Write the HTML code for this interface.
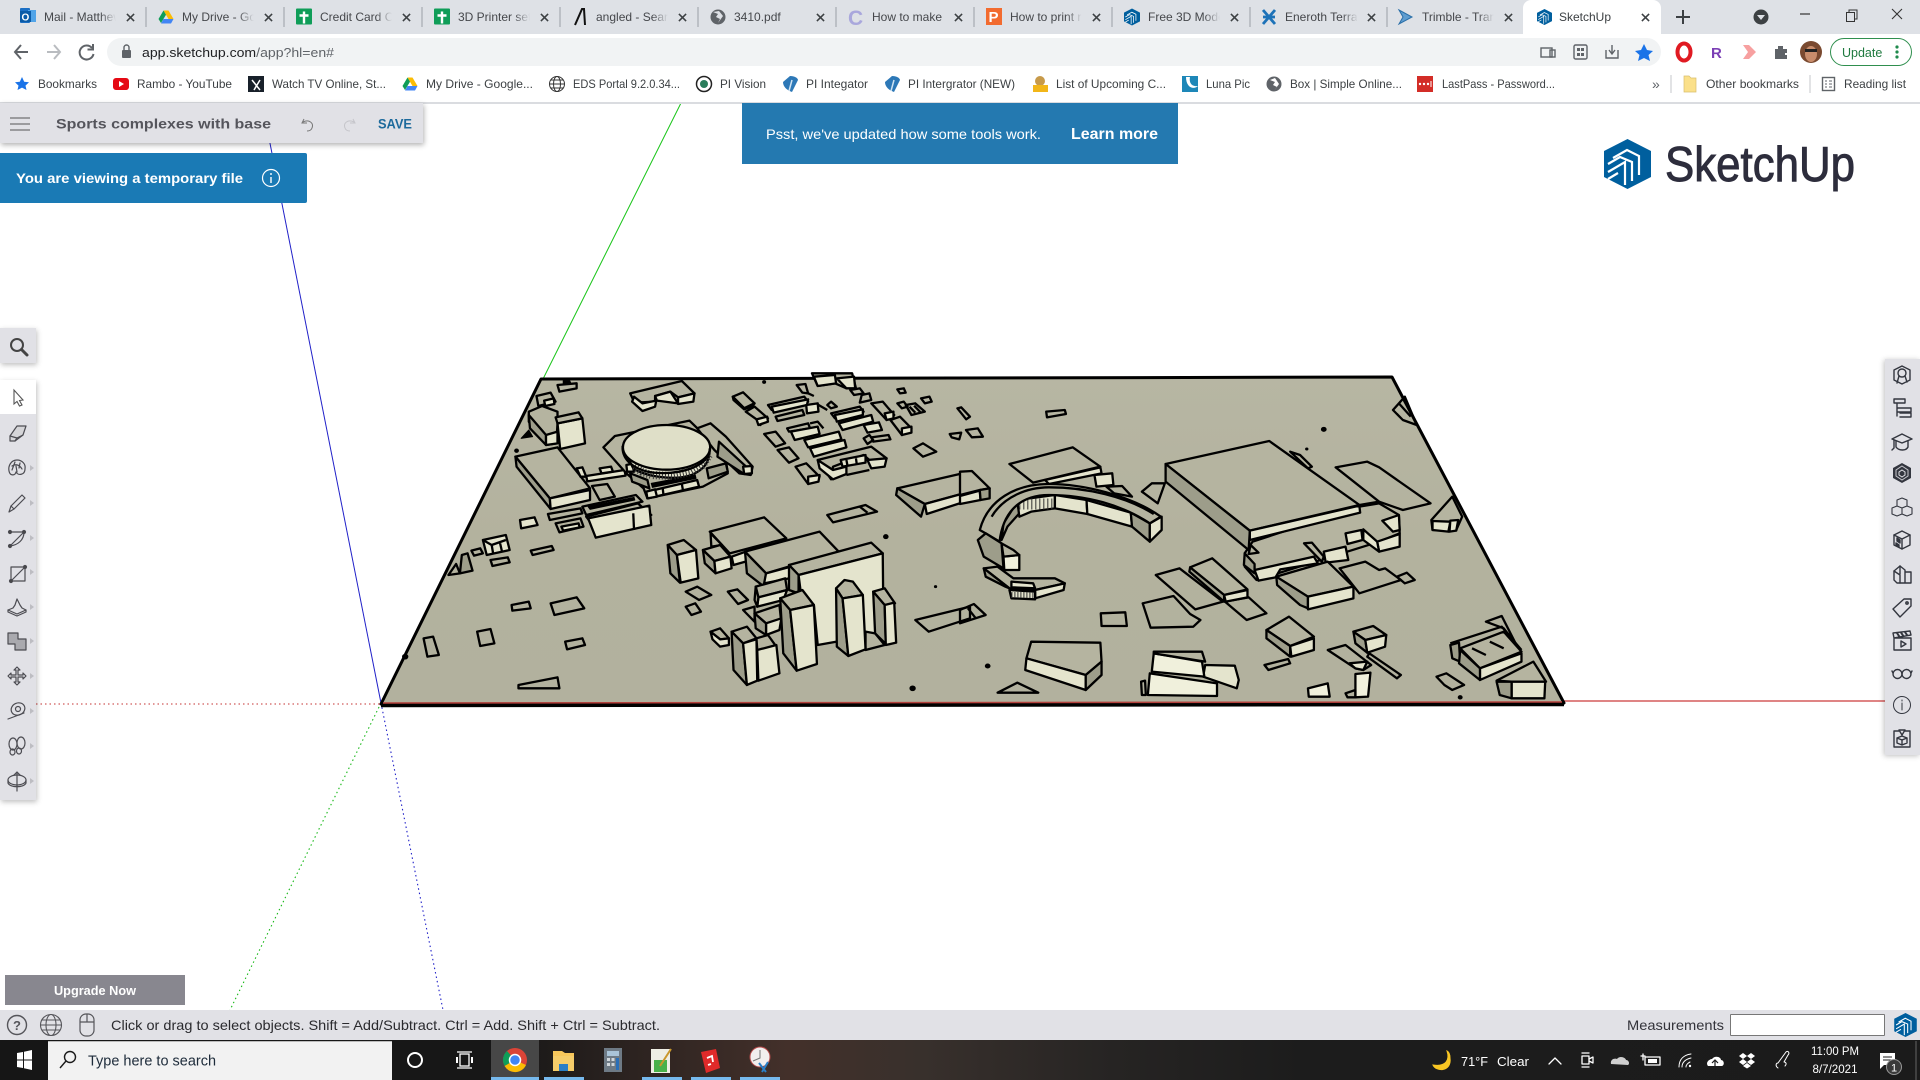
<!DOCTYPE html>
<html lang="en"><head><meta charset="utf-8"><title>SketchUp</title>
<style>
html,body{margin:0;padding:0;width:1920px;height:1080px;overflow:hidden;background:#fff;font-family:"Liberation Sans",sans-serif}
svg{position:absolute;left:0;top:0}
.p{position:absolute;background:#e1e1e6}
text{font-family:"Liberation Sans",sans-serif}
.m path,.m polygon,.m ellipse,.m circle{vector-effect:non-scaling-stroke;stroke:#000;stroke-width:2.3;stroke-linejoin:round}
.m .t{fill:#b5b4a0}.m .l{fill:#e4e4cd}.m .w{fill:#f0f0dc}.m .d{fill:#9d9d8a}.m .f{fill:none}.m .k{fill:#000;stroke-width:1}
.tt{font-size:12px;fill:#45474b}.bt{font-size:12px;fill:#3c4043}
.i{fill:none;stroke:#4c4c52;stroke-width:1.2;stroke-linejoin:round;stroke-linecap:round}
.r{fill:none;stroke:#33363f;stroke-width:1.4;stroke-linejoin:round;stroke-linecap:round}
.tr{fill:none;stroke:#fff;stroke-width:1.3;stroke-linecap:round;stroke-linejoin:round}
</style></head><body>

<svg width="1920" height="1080" viewBox="0 0 1920 1080">
<!-- axes -->
<line x1="262" y1="103" x2="381" y2="703" stroke="#2020c8" stroke-width="1"/>
<line x1="681" y1="103" x2="381" y2="703" stroke="#16c416" stroke-width="1"/>
<line x1="1564" y1="701" x2="1885" y2="701" stroke="#cc3a3a" stroke-width="1.2"/>
<line x1="36" y1="704" x2="381" y2="704" stroke="#c43030" stroke-width="1.1" stroke-dasharray="1.5 3"/>
<line x1="381" y1="703" x2="230" y2="1010" stroke="#18b818" stroke-width="1.1" stroke-dasharray="1.5 3"/>
<line x1="381" y1="703" x2="443" y2="1010" stroke="#2020c8" stroke-width="1.1" stroke-dasharray="1.5 3"/>

<!-- plane -->
<defs><linearGradient id="pg" x1="0" y1="0" x2="0" y2="1"><stop offset="0" stop-color="#b7b6a3"/><stop offset=".5" stop-color="#b3b29e"/><stop offset="1" stop-color="#b2b19e"/></linearGradient></defs>
<polygon points="541,379 1392,377 1564,703 381,704" fill="url(#pg)" stroke="#000" stroke-width="3" stroke-linejoin="round"/>
<line x1="381" y1="706" x2="1564" y2="705" stroke="#000" stroke-width="2.5"/>
<line x1="383" y1="703" x2="1562" y2="702" stroke="#b5413c" stroke-width="1.5"/>

<!-- model left half -->
<g class="m" transform="translate(370,360) scale(.38265,.33333)">
<path class="f" d="M140,835L165,830L180,885L150,890Z"/><path class="f" d="M280,815L315,807L325,850L288,858Z"/>
<path class="f" d="M370,735L415,725L420,745L372,752Z"/><path class="f" d="M472,730L540,712L560,745L482,765Z"/>
<path class="f" d="M510,845L555,835L562,855L515,868Z"/><path class="f" d="M388,975L490,952L495,985L388,985Z"/>
<path class="f" d="M420,572L475,558L480,570L425,585Z"/><path class="f" d="M315,600L360,592L365,607L320,618Z"/>
<path class="l" d="M392,480L430,472L438,495L395,505Z"/>
<path class="f" d="M1195,465L1295,435L1325,455L1210,487Z"/><path class="f" d="M1280,440L1300,458"/>
<path class="f" d="M1425,780L1568,740L1568,775L1460,815Z"/>
<path class="f" d="M935,695L960,688L988,720L962,732Z"/><path class="f" d="M825,695L855,680L892,705L860,720Z"/><path class="f" d="M825,740L850,730L865,755L840,765Z"/>
<path class="f" d="M465,462L550,445L555,460L470,480Z"/><path class="f" d="M485,490L550,475L558,500L495,517Z"/>
<path class="l" d="M500,500L545,490L548,502L505,512Z"/>
<circle class="k" cx="383" cy="272" r="5"/><circle class="k" cx="1348" cy="530" r="6"/><circle class="k" cx="1478" cy="680" r="3"/><circle class="k" cx="1418" cy="985" r="7"/><circle class="k" cx="92" cy="890" r="7"/><circle class="k" cx="1030" cy="66" r="4"/>
<!-- top left small -->
<path class="f" d="M490,75L540,70L540,85L495,95Z"/><path class="k" d="M505,62L522,62L525,70L505,72Z"/>
<path class="t" d="M435,108L472,98L485,125L440,138Z"/><path class="l" d="M455,122L480,115L482,132L458,138Z"/>
<path class="t" d="M415,155L450,138L490,155L490,190L487,250L460,255L415,185Z"/><path class="d" d="M415,165L460,225L460,255L418,205Z"/>
<path class="l" d="M460,225L490,215L490,250L460,255Z"/>
<path class="l" d="M490,190L555,175L562,250L497,267Z"/><path class="t" d="M485,172L545,157L555,175L490,190Z"/>
<path class="k" d="M395,235L415,210L425,230Z"/>
<!-- U shape -->
<path class="t" d="M680,100L815,63L848,100L805,112L785,95L745,108L745,125L712,127L690,125Z"/>
<path class="l" d="M690,110L712,130L748,122L745,140L712,153L685,125Z"/><path class="l" d="M745,108L785,95L805,130L750,122Z"/><path class="l" d="M805,112L848,100L845,125L805,132Z"/>
<!-- long block -->
<path class="t" d="M380,290L490,262L575,385L470,415Z"/><path class="d" d="M380,290L470,415L472,447L383,320Z"/><path class="l" d="M470,415L575,390L575,420L472,447Z"/>
<path class="l" d="M565,348L665,330L668,347L568,364Z"/>
<path class="t" d="M580,378L620,372L640,410L600,420Z"/>
<path class="l" d="M600,325L630,320L635,335L605,340Z"/><path class="l" d="M540,325L555,322L565,350L550,350Z"/>
<!-- stadium base -->
<path class="t" d="M610,262L640,228L835,182L860,210L930,300L935,340L870,380L725,415L715,385L670,340Z"/>
<path class="l" d="M725,395L855,360L860,380L725,415Z"/><path class="f" d="M765,385L767,405M815,372L818,392"/>
<path class="d" d="M680,340L725,360L730,385L685,365Z"/>
<path class="l" d="M670,315L690,310L690,335L672,335Z"/>
<path class="d" d="M880,325L930,310L935,335L885,355Z"/>
<path class="k" d="M735,370L850,345L852,355L738,382Z"/>
<!-- right arc -->
<path class="t" d="M855,205L890,190L930,230L1000,320L995,345L965,340L900,270Z"/>
<path class="d" d="M912,245L985,322L975,340L908,290Z"/><path class="l" d="M975,320L998,318L998,340L978,342Z"/>
<!-- stadium cylinder -->
<path class="l" d="M660,260L688,325C710,345 790,365 840,345C870,330 888,310 888,265Z"/>
<path d="M690,320L710,335L735,345L790,348L840,335L870,315L886,285" stroke-dasharray="1 2" style="stroke-width:8;fill:none;stroke:#333"/>
<ellipse class="t" cx="775" cy="262" rx="114" ry="67" style="fill:#dfdfc8"/>
<path class="f" d="M660,262C660,300 690,330 740,338C810,345 888,320 888,265"/>
<!-- block below -->
<path class="t" d="M555,440L695,405L712,425L565,465Z"/><path class="k" d="M570,440L690,412L692,420L575,448Z"/>
<path class="t" d="M565,470L700,430L735,465L585,500Z"/><path class="l" d="M570,475L730,437L735,495L590,533Z"/><path class="f" d="M688,460L690,510"/>
<path class="l" d="M722,395L745,388L750,410L725,415Z"/>
<!-- left houses -->
<path class="l" d="M295,540L355,525L365,570L305,585Z"/><path class="f" d="M318,555L322,582M340,550L345,575M295,540L318,555L355,540"/>
<path class="f" d="M265,572L288,565L295,580L272,587Z"/>
<path class="d" d="M240,585L255,580L268,632L235,640Z"/><path class="f" d="M205,645L225,612L235,640Z"/>
<!-- towers -->
<path class="t" d="M888,515L1030,472L1088,535L940,580Z"/><path class="l" d="M945,590L1055,545L1085,540L1090,570L950,615Z"/><path class="t" d="M890,520L920,555L892,560Z"/>
<path class="t" d="M778,555L820,540L852,570L802,585Z"/><path class="d" d="M778,555L802,585L810,668L785,640Z"/><path class="l" d="M802,585L852,570L858,655L812,668Z"/>
<path class="t" d="M870,570L915,555L942,590L900,603Z"/><path class="d" d="M870,570L900,603L903,640L875,610Z"/><path class="l" d="M900,603L942,590L945,625L903,640Z"/>
<path class="t" d="M980,575L1175,515L1225,575L1035,640Z"/><path class="d" d="M980,575L1035,640L1030,680L985,640Z"/><path class="l" d="M1035,640L1100,620L1095,655L1030,670Z"/>
<path class="t" d="M1008,680L1085,655L1090,690L1015,712Z"/><path class="l" d="M1015,712L1090,690L1080,720L1012,740Z"/><path class="d" d="M1008,680L1015,712L1012,740L1005,720Z"/>
<path class="t" d="M1005,760L1070,735L1075,790L1035,790Z"/><path class="l" d="M1035,790L1075,775L1070,810L1035,825Z"/><path class="d" d="M1005,760L1035,790L1035,825L1008,805Z"/>
<path class="f" d="M975,750L1005,740L1005,785Z"/>
<path class="t" d="M1095,615L1310,548L1340,580L1120,645Z"/><path class="d" d="M1095,615L1120,645L1120,700L1095,690Z"/><path class="l" d="M1120,645L1340,580L1342,820L1170,855L1160,735L1125,690Z"/>
<path class="t" d="M1295,815L1320,820L1345,855L1295,870Z"/>
<path class="t" d="M1072,715L1130,690L1160,735L1098,750Z"/><path class="d" d="M1072,715L1098,750L1115,932L1080,880Z"/><path class="l" d="M1098,750L1160,735L1168,912L1115,932Z"/>
<path class="t" d="M1218,685L1240,660L1262,665L1288,705L1235,715Z"/><path class="d" d="M1218,685L1235,715L1250,888L1220,860Z"/><path class="l" d="M1235,715L1288,705L1295,868L1250,888Z"/>
<path class="t" d="M1315,695L1345,685L1372,730L1345,735Z"/><path class="d" d="M1315,695L1345,735L1348,852L1320,820Z"/><path class="l" d="M1345,735L1370,728L1375,848L1348,855Z"/>
<path class="t" d="M945,815L985,800L1010,835L975,850Z"/><path class="d" d="M945,815L975,850L985,975L950,930Z"/><path class="l" d="M975,850L1010,838L1012,962L985,975Z"/>
<path class="t" d="M1010,835L1040,825L1062,860L1012,870Z"/><path class="l" d="M1012,870L1062,855L1070,940L1015,962Z"/>
<path class="t" d="M890,815L915,805L938,835L915,838Z"/><path class="l" d="M915,838L938,835L938,855L915,860L895,838L890,815Z"/>
<!-- upper right cluster -->
<path class="t" d="M948,110L975,97L1005,130L978,145Z"/><path class="l" d="M950,120L978,148L1000,138L1005,130L978,145L948,110Z"/>
<path class="t" d="M982,155L1005,140L1040,175L1020,195L1010,178Z"/><path class="l" d="M1010,178L1038,170L1040,185L1015,195Z"/>
<path class="t" d="M1040,135L1135,110L1145,125L1050,150Z"/><path class="l" d="M1050,140L1145,118L1142,135L1055,158Z"/>
<path class="f" d="M1060,170L1130,150L1135,165L1065,183Z"/>
<path class="f" d="M1115,75L1138,72L1145,100L1130,98Z"/><path class="f" d="M1145,100L1160,108M1165,130L1195,150M1205,125L1220,140L1205,145L1195,135Z"/>
<path class="l" d="M1140,135L1170,130L1172,155L1142,160Z"/>
<path class="t" d="M1155,40L1260,40L1270,85L1245,85L1215,70L1170,78Z"/><path class="l" d="M1160,50L1215,45L1218,70L1170,78Z"/><path class="l" d="M1220,55L1265,50L1268,85L1245,85Z"/>
<path class="f" d="M1255,90L1280,85L1290,100L1265,105ZM1285,105L1305,100L1310,120L1280,128Z"/>
<path class="t" d="M1205,160L1280,140L1290,155L1215,175Z"/><path class="l" d="M1215,165L1288,148L1288,165L1220,185Z"/>
<path class="l" d="M1225,190L1310,165L1315,185L1235,210Z"/>
<path class="l" d="M1290,195L1330,187L1338,210L1300,218Z"/>
<path class="f" d="M1090,205L1145,190L1150,205L1095,215ZM1150,190L1170,185L1185,205"/>
<path class="l" d="M1100,215L1170,200L1175,222L1110,240Z"/>
<path class="l" d="M1135,240L1225,215L1232,238L1145,262Z"/><path class="l" d="M1150,265L1240,240L1245,262L1160,290Z"/>
<path class="f" d="M1030,222L1060,215L1085,250L1060,260Z"/><path class="f" d="M1065,270L1095,262L1120,295L1095,308Z"/>
<path class="t" d="M1112,320L1140,310L1175,350L1145,372Z"/><path class="l" d="M1145,350L1175,345L1172,365L1145,372Z"/>
<path class="t" d="M1170,300L1310,260L1350,295L1310,305L1290,285L1210,320L1205,358Z"/>
<path class="l" d="M1170,300L1210,330L1245,320L1245,342L1210,358L1175,325Z"/><path class="l" d="M1300,300L1350,295L1345,320L1310,325Z"/><path class="l" d="M1230,300L1295,285L1295,308L1235,320Z"/>
<path class="f" d="M1245,300L1248,318M1270,295L1272,312M1245,345L1305,330"/>
<path class="t" d="M1310,130L1340,125L1370,165L1350,180Z"/><path class="l" d="M1345,160L1368,155L1368,175L1350,180Z"/>
<path class="t" d="M1360,180L1385,170L1415,205L1390,225Z"/><path class="l" d="M1390,205L1415,200L1415,218L1390,225Z"/>
<path class="f" d="M1378,130L1395,125L1405,140L1390,145Z"/><path class="f" d="M1400,135L1425,130L1450,155L1415,165Z"/><path class="f" d="M1410,140L1425,158M1422,137L1438,156"/>
<path class="f" d="M1378,88L1395,85L1400,98L1385,100Z"/><path class="f" d="M1440,115L1462,110L1468,125L1450,130Z"/>
<path class="f" d="M1420,265L1445,250L1480,275L1445,290Z"/>
<path class="f" d="M1290,235L1305,225L1315,240L1300,252Z"/><path class="f" d="M1310,232L1355,225L1360,238L1315,245Z"/>
<path class="f" d="M1515,222L1545,218L1540,238L1520,232Z"/><path class="f" d="M1535,145L1545,142L1568,170L1558,178Z"/>
<!-- right block -->
<path class="t" d="M1378,385L1568,335L1568,395L1450,432Z"/><path class="d" d="M1375,405L1440,470L1450,432L1378,385Z"/><path class="l" d="M1450,432L1568,395L1568,420L1455,462Z"/>
</g>

<!-- model right half -->
<g class="m" transform="translate(960,360) scale(.39541,.33333)">
<path class="t" d="M0,335L30,333L75,385L50,390L0,405Z"/><path class="l" d="M0,408L50,392L52,420L0,432Z"/><path class="d" d="M50,390L75,385L75,415L52,420Z"/>
<path class="f" d="M218,155L265,150L268,162L220,172Z"/><path class="f" d="M15,210L45,205L58,230L30,232Z"/>
<path class="f" d="M0,750L35,732L65,765L0,790Z"/><path class="f" d="M20,745L40,775"/>
<path class="t" d="M125,312L285,262L355,320L185,368Z"/><path class="l" d="M215,360L355,322L358,340L225,372Z"/><path class="l" d="M340,345L385,340L388,375L345,380Z"/>
<path class="t" d="M370,380L410,378L435,410L390,400Z"/>
<!-- arc -->
<path class="d" d="M105,540L110,490L145,425L150,460L120,500Z"/>
<path class="l" d="M145,420L240,405L240,445L180,455L150,470Z"/>
<path d="M150,432H238" stroke-dasharray="1 3" style="stroke-width:11;fill:none;stroke:#333"/>
<path class="l" d="M240,405L320,420L322,462L240,445Z"/><path class="l" d="M320,420L432,458L435,500L322,462Z"/>
<path class="d" d="M432,458L480,490L480,545L435,500Z"/><path class="l" d="M480,490L510,470L510,510L480,545Z"/>
<path class="t" d="M50,510C70,420 140,372 225,372C310,372 430,405 508,470L480,490C410,435 320,405 225,405C160,405 110,445 100,545L65,520Z"/>
<path class="f" d="M80,470C110,410 170,382 225,382C320,382 420,410 490,462"/>
<path class="d" d="M45,540L65,520L105,550L110,625L60,590Z"/><path class="w" d="M110,590L150,585L150,630L112,630Z"/>
<path class="t" d="M105,550L135,570L150,585L110,590Z"/>
<path class="t" d="M60,625L95,620L135,655L240,655L265,670L190,690L125,685Z"/>
<path class="l" d="M190,690L265,670L262,690L190,715Z"/><path class="d" d="M60,625L125,685L115,680L65,650Z"/>
<path class="l" d="M130,665L185,670L190,685L130,682Z"/>
<path class="l" d="M125,690L190,695L190,718L130,715Z"/><path d="M130,705H190" stroke-dasharray="1 2" style="stroke-width:6;fill:none;stroke:#333"/>
<!-- big block & base -->
<path class="t" d="M460,395L485,370L518,370L500,430Z"/>
<path class="t" d="M720,580L740,545L1010,440L1060,430L1110,465L1112,520L1060,545L750,660L720,620Z"/>
<path class="t" d="M520,312L782,243L1010,435L733,512Z"/><path class="d" d="M520,312L733,512L730,570L520,365Z"/><path class="l" d="M733,512L1010,437L1012,458L733,540Z"/>
<path class="f" d="M835,275L860,285L890,320L880,325Z"/>
<path class="l" d="M1068,482L1110,465L1112,510L1095,515Z"/><path class="l" d="M1055,545L1112,522L1112,560L1060,575Z"/><path class="l" d="M1020,508L1055,545L1060,575L1020,540Z"/>
<path class="l" d="M975,520L1015,510L1018,540L980,552Z"/><path class="l" d="M920,575L975,560L982,600L925,608Z"/>
<path class="t" d="M870,550L890,548L920,590L915,605Z"/>
<path class="l" d="M745,630L895,590L905,610L810,628L798,652L755,662Z"/>
<path class="f" d="M735,555L755,578L730,582Z"/><path class="d" d="M720,580L745,612L745,640L718,615Z"/>
<!-- flats -->
<path class="f" d="M950,322L1030,305L1060,322L1190,430L1120,450L1060,425Z"/>
<path class="f" d="M1010,435L1060,425"/>
<path class="f" d="M495,645L555,625L665,725L595,748Z"/><path class="f" d="M670,725L730,712L775,760L725,780Z"/>
<path class="t" d="M582,622L638,595L727,688L668,705Z"/><path class="d" d="M582,622L668,705L668,725L580,635Z"/><path class="l" d="M668,705L727,690L727,712L672,725Z"/>
<path class="f" d="M960,625L1025,605L1060,630L1075,625L1115,660L1010,700Z"/><path class="f" d="M1105,650L1130,638L1150,660L1125,670Z"/>
<path class="t" d="M800,650L930,605L995,680L880,710Z"/><path class="d" d="M800,650L880,710L880,745L860,735L802,675Z"/><path class="l" d="M880,710L995,680L995,715L880,748Z"/>
<path class="f" d="M462,730L540,708L582,762L608,780L590,800L482,803Z"/>
<path class="f" d="M356,760L418,757L422,798L358,798Z"/>
<!-- big poly -->
<path class="t" d="M180,845L355,848L358,905L318,945L168,895Z"/><path class="l" d="M168,895L318,945L318,990L165,930Z"/><path class="d" d="M318,945L358,905L358,945L318,990Z"/>
<path class="f" d="M95,998L145,968L198,998Z"/>
<!-- stack -->
<path class="l" d="M620,915L695,917L705,960L700,985L615,950Z"/>
<path class="w" d="M490,880L612,905L618,950L485,935Z"/><path class="t" d="M490,875L612,875L620,905L490,880Z"/>
<path class="w" d="M480,940L650,970L650,1008L475,1005Z"/><path class="f" d="M458,965L468,962L470,1005L460,1005Z"/>
<!-- others -->
<path class="t" d="M775,810L832,770L895,830L835,858Z"/><path class="d" d="M775,810L835,858L835,890L775,835Z"/><path class="l" d="M835,858L895,835L895,870L838,890Z"/>
<path class="f" d="M770,915L830,897L835,910L780,930Z"/>
<path class="w" d="M880,985L930,970L935,1010L882,1010Z"/>
<path class="w" d="M1000,942L1038,938L1032,1010L1000,1012Z"/><path class="f" d="M975,1000L1000,990L1000,1012L980,1012Z"/>
<path class="f" d="M930,870L975,855L1040,915L1020,930L1000,925Z"/><path class="f" d="M1035,880L1115,945L1105,955L1030,890Z"/><path class="l" d="M985,910L1030,905L1020,930L1000,925Z"/>
<path class="t" d="M995,815L1045,798L1078,825L1025,840Z"/><path class="d" d="M995,815L1025,840L1030,878L1000,850Z"/><path class="l" d="M1025,840L1078,825L1075,860L1030,878Z"/>
<path class="f" d="M1240,850L1370,800L1420,870"/>
<path class="d" d="M1240,855L1262,848L1265,905L1245,895Z"/>
<path class="t" d="M1265,865L1375,815L1420,875L1315,925Z"/><path class="l" d="M1315,925L1420,880L1420,905L1315,960Z"/><path class="d" d="M1265,870L1315,925L1315,960L1262,910Z"/>
<path class="f" d="M1295,865L1330,885M1340,845L1375,865"/>
<path class="f" d="M1330,785L1370,768L1405,850L1375,805Z"/>
<path class="t" d="M1357,962L1450,905L1482,965L1395,965Z"/><path class="l" d="M1395,965L1480,965L1478,1015L1395,1015Z"/><path class="d" d="M1357,965L1395,965L1395,1015L1365,1005Z"/>
<path class="f" d="M1205,950L1230,940L1275,975L1245,990L1225,975Z"/>
<path class="f" d="M1095,150L1125,110L1155,195L1120,180Z"/><path class="f" d="M1110,130L1140,170"/>
<path class="t" d="M1192,480L1245,410L1270,470L1255,510L1195,510Z"/><path class="l" d="M1195,483L1240,485L1235,515L1195,510Z"/><path class="l" d="M1240,482L1260,480L1255,512L1238,515Z"/>
<circle class="k" cx="920" cy="208" r="6"/><circle class="k" cx="877" cy="267" r="3"/><circle class="k" cx="70" cy="918" r="6"/><circle class="k" cx="1265" cy="1012" r="5"/>
</g>
</svg>

<!-- Chrome -->
<div class="p" style="left:0;top:0;width:1920px;height:34px;background:#dee1e6"></div>
<div class="p" style="left:0;top:34px;width:1920px;height:68px;background:#fff;border-bottom:2px solid #dadce0"></div>
<div class="p" style="left:1523px;top:0;width:138px;height:34px;background:#fff;border-radius:8px 8px 0 0"></div>
<div class="p" style="left:107px;top:38px;width:1554px;height:28px;background:#f1f3f4;border-radius:14px"></div>
<div class="p" style="left:1830px;top:38px;width:80px;height:26px;background:#fff;border:1.5px solid #2f8f4e;border-radius:14px"></div>

<!-- SketchUp panels -->
<div class="p" style="left:0;top:103px;width:423px;height:40px;box-shadow:1px 2px 5px rgba(0,0,0,.3)"></div>
<div class="p" style="left:0;top:153px;width:307px;height:50px;background:#1a7ab5;border-radius:0 2px 2px 0"></div>
<div class="p" style="left:742px;top:103px;width:436px;height:61px;background:#2479b0"></div>
<div class="p" style="left:0;top:328px;width:36px;height:35px;box-shadow:1px 2px 5px rgba(0,0,0,.25)"></div>
<div class="p" style="left:0;top:380px;width:36px;height:420px;box-shadow:1px 2px 5px rgba(0,0,0,.25)"></div>
<div class="p" style="left:0;top:380px;width:36px;height:34px;background:#fff"></div>
<div class="p" style="left:1885px;top:359px;width:35px;height:396px;box-shadow:-1px 1px 5px rgba(0,0,0,.25)"></div>
<div class="p" style="left:5px;top:975px;width:180px;height:30px;background:#88878f"></div>
<div class="p" style="left:0;top:1010px;width:1920px;height:30px"></div>
<div class="p" style="left:1730px;top:1014px;width:153px;height:20px;background:#fff;border:1px solid #777;border-radius:1px"></div>
<!-- Taskbar -->
<div class="p" style="left:0;top:1040px;width:1920px;height:40px;background:linear-gradient(90deg,#161616 0,#171717 26%,#2c2320 33%,#43302a 41%,#38302c 48%,#262423 58%,#1c1c1c 68%,#1b1b1b 100%)"></div>
<div class="p" style="left:48px;top:1041px;width:344px;height:38px;background:#f2f2f2;border-top:1px solid #bbb"></div>
<div class="p" style="left:491px;top:1040px;width:48px;height:40px;background:#474747"></div>
<div class="p" style="left:491px;top:1077px;width:48px;height:3px;background:#76b9ed"></div>
<div class="p" style="left:544px;top:1077px;width:40px;height:3px;background:#76b9ed"></div>
<div class="p" style="left:642px;top:1077px;width:40px;height:3px;background:#76b9ed"></div>
<div class="p" style="left:691px;top:1077px;width:40px;height:3px;background:#76b9ed"></div>
<div class="p" style="left:740px;top:1077px;width:40px;height:3px;background:#76b9ed"></div>

<svg width="1920" height="1080" viewBox="0 0 1920 1080">
<defs>
<linearGradient id="fd" x1="0" x2="1"><stop offset="0" stop-color="#dee1e6" stop-opacity="0"/><stop offset="1" stop-color="#dee1e6"/></linearGradient>
<symbol id="su" viewBox="0 0 47 50">
<path d="M23.5 0L47 12V38L23.5 50L0 38V12Z" fill="#005f9e"/>
<path d="M9 19L23 11L35 17V36M4 25L16 18L28 23V42M4 33L21 23V46M4 40L14 34" fill="none" stroke="#fff" stroke-width="2.2"/>
</symbol>
<symbol id="gd" viewBox="0 0 16 16">
<path d="M5.500 1.500H10.500L15.500 10H10.500Z" fill="#fbbc04"/><path d="M5.500 1.500L0.500 10L3 14L8 5.800Z" fill="#0f9d58"/><path d="M3 14.500H13L15.500 10H5.500Z" fill="#4285f4"/>
</symbol>
<symbol id="sh" viewBox="0 0 16 16"><rect width="16" height="16" x="0" rx="1" fill="#0f9d58" /><path d="M8 3V15M3.500 7H12.500" stroke="#fff" stroke-width="2.4"/></symbol>
<symbol id="x" viewBox="0 0 10 10"><path d="M1 1L9 9M9 1L1 9" stroke="#3c4043" stroke-width="1.7" fill="none"/></symbol>
</defs>

<!-- Tabs -->
<rect x="20" y="8" width="10" height="15" rx="1" fill="#1c6fc4"/><rect x="28" y="10" width="8" height="12" fill="#51a4e8"/><rect x="20" y="11" width="11" height="11" fill="#0a5ba8"/><text x="21.500" y="20.500" font-size="10" font-weight="700" fill="#fff">O</text>
<use href="#gd" x="158" y="9" width="16" height="16"/>
<use href="#sh" x="296" y="8" width="16" height="17"/>
<use href="#sh" x="434" y="8" width="16" height="17"/>
<path d="M575 25L582 9L584 9L585 25" fill="none" stroke="#111" stroke-width="2"/>
<circle cx="718" cy="17" r="7.500" fill="#5f6368"/><path d="M713 12L718 14L716 17L720 19L718 23L723 16L719 11Z" fill="#dee1e6"/>
<text x="848" y="25" font-size="21" font-weight="700" fill="#a9a7dc">C</text>
<rect x="986" y="8" width="16" height="17" fill="#f26b2f"/><text x="988.500" y="22" font-size="15" font-weight="700" fill="#fff">P</text>
<use href="#su" x="1124" y="8" width="16" height="18"/>
<path d="M1263 10L1275 24M1275 10L1263 24M1263 17H1275" stroke="#1d72b8" stroke-width="2.800" fill="none"/>
<path d="M1399 10L1412 17L1399 24L1403 17Z" fill="#5f9dd0" stroke="#2a6fa8"/>
<use href="#su" x="1537" y="9" width="15" height="16"/>

<svg x="44" y="5" width="72" height="22"><text class="tt" x="0" y="16">Mail - Matthew</text></svg>
<svg x="182" y="5" width="72" height="22"><text class="tt" x="0" y="16">My Drive - Google</text></svg>
<svg x="320" y="5" width="72" height="22"><text class="tt" x="0" y="16">Credit Card Charges</text></svg>
<svg x="458" y="5" width="72" height="22"><text class="tt" x="0" y="16">3D Printer settings</text></svg>
<svg x="596" y="5" width="72" height="22"><text class="tt" x="0" y="16">angled - Search</text></svg>
<svg x="734" y="5" width="72" height="22"><text class="tt" x="0" y="16">3410.pdf</text></svg>
<svg x="872" y="5" width="72" height="22"><text class="tt" x="0" y="16">How to make</text></svg>
<svg x="1010" y="5" width="72" height="22"><text class="tt" x="0" y="16">How to print r</text></svg>
<svg x="1148" y="5" width="72" height="22"><text class="tt" x="0" y="16">Free 3D Models</text></svg>
<svg x="1285" y="5" width="72" height="22"><text class="tt" x="0" y="16">Eneroth Terrain</text></svg>
<svg x="1422" y="5" width="72" height="22"><text class="tt" x="0" y="16">Trimble - Translate</text></svg>
<svg x="1559" y="5" width="72" height="22"><text class="tt" style="fill:#3c4043" x="0" y="16">SketchUp</text></svg>
<g fill="url(#fd)"><rect x="100" y="6" width="16" height="22"/><rect x="238" y="6" width="16" height="22"/><rect x="376" y="6" width="16" height="22"/><rect x="514" y="6" width="16" height="22"/><rect x="652" y="6" width="16" height="22"/><rect x="1066" y="6" width="16" height="22"/><rect x="1204" y="6" width="16" height="22"/><rect x="1342" y="6" width="16" height="22"/><rect x="1478" y="6" width="16" height="22"/></g>

<use href="#x" x="126" y="13" width="9" height="9"/><use href="#x" x="264" y="13" width="9" height="9"/><use href="#x" x="402" y="13" width="9" height="9"/><use href="#x" x="540" y="13" width="9" height="9"/><use href="#x" x="678" y="13" width="9" height="9"/><use href="#x" x="816" y="13" width="9" height="9"/><use href="#x" x="954" y="13" width="9" height="9"/><use href="#x" x="1092" y="13" width="9" height="9"/><use href="#x" x="1230" y="13" width="9" height="9"/><use href="#x" x="1367" y="13" width="9" height="9"/><use href="#x" x="1504" y="13" width="9" height="9"/><use href="#x" x="1641" y="13" width="9" height="9"/>
<g stroke="#9aa0a6" stroke-width="1"><line x1="146" y1="7" x2="146" y2="27"/><line x1="284" y1="7" x2="284" y2="27"/><line x1="422" y1="7" x2="422" y2="27"/><line x1="560" y1="7" x2="560" y2="27"/><line x1="698" y1="7" x2="698" y2="27"/><line x1="836" y1="7" x2="836" y2="27"/><line x1="974" y1="7" x2="974" y2="27"/><line x1="1112" y1="7" x2="1112" y2="27"/><line x1="1250" y1="7" x2="1250" y2="27"/><line x1="1387" y1="7" x2="1387" y2="27"/></g>
<path d="M1683 10V24M1676 17H1690" stroke="#3c4043" stroke-width="2"/>
<circle cx="1761" cy="17" r="7.500" fill="#3c4043"/><path d="M1757 15H1765L1761 20Z" fill="#dee1e6"/>
<path d="M1800 14H1810" stroke="#333" stroke-width="1.200"/>
<rect x="1846.500" y="12.500" width="8" height="9" fill="none" stroke="#333"/><path d="M1849 12.500V10H1857V19H1855" fill="none" stroke="#333"/>
<path d="M1892 9L1902 19M1902 9L1892 19" stroke="#333" stroke-width="1.100"/>

<!-- Address row -->
<path d="M28 52H15M21 45L15 52L21 59" fill="none" stroke="#5f6368" stroke-width="2"/>
<path d="M47 52H60M54 45L60 52L54 59" fill="none" stroke="#b9bcc0" stroke-width="2"/>
<path d="M92 48A7 7 0 1 0 93.500 54M93 44V49.500H87.500" fill="none" stroke="#5f6368" stroke-width="2"/>
<rect x="122" y="50" width="9" height="8" rx="1" fill="#5f6368"/><path d="M124 50V47.500A2.500 2.500 0 0 1 129 47.500V50" fill="none" stroke="#5f6368" stroke-width="1.400"/>
<text x="142" y="57" font-size="13" textLength="192" lengthAdjust="spacingAndGlyphs" fill="#202124">app.sketchup.com<tspan fill="#5f6368">/app?hl=en#</tspan></text>
<g fill="none" stroke="#5f6368" stroke-width="1.400"><rect x="1541" y="48" width="11" height="9"/><rect x="1550" y="50" width="5" height="7"/><rect x="1574" y="45" width="13" height="14" rx="1.500"/></g>
<rect x="1577" y="48" width="3" height="3" fill="#5f6368"/><rect x="1581" y="48" width="3" height="3" fill="#5f6368"/><rect x="1577" y="53" width="3" height="3" fill="#5f6368"/><rect x="1581" y="53" width="3" height="3" fill="#5f6368"/>
<path d="M1612 45V53M1609 50L1612 54L1615 50M1606 50V58H1618V50" fill="none" stroke="#5f6368" stroke-width="1.400"/>
<path d="M1644 44L1647 50L1653 51L1648.500 55L1650 61L1644 58L1638 61L1639.500 55L1635 51L1641 50Z" fill="#1a73e8"/>
<ellipse cx="1684" cy="52" rx="6.500" ry="8.500" fill="none" stroke="#e01a22" stroke-width="4"/>
<text x="1711" y="58" font-size="15" font-weight="700" fill="#7b3fb5">R</text>
<path d="M1743 45H1749L1756 52L1749 59H1743L1748 52Z" fill="#f7a0a0"/>
<path d="M1775 49H1778V46H1783V49H1787V53H1785V55H1787V59H1775Z" fill="#5f6368"/>
<circle cx="1811" cy="52" r="11" fill="#7a4a30"/><ellipse cx="1811" cy="54" rx="6" ry="8" fill="#c98d6c"/><rect x="1805" y="49" width="12" height="3" fill="#222"/>
<text x="1842" y="57" font-size="12.500" fill="#1f7a3f">Update</text>
<g fill="#1f8a4c"><circle cx="1897" cy="47" r="1.600"/><circle cx="1897" cy="52" r="1.600"/><circle cx="1897" cy="57" r="1.600"/></g>

<!-- Bookmarks -->
<path d="M22 77L24.200 81.800L29 82.300L25.500 85.600L26.500 90L22 87.600L17.500 90L18.500 85.600L15 82.300L19.800 81.800Z" fill="#1a73e8"/>
<rect x="113" y="78" width="16" height="12" rx="3" fill="#e50914"/><path d="M119 81V87L124 84Z" fill="#fff"/>
<rect x="248" y="76" width="16" height="16" fill="#18202a"/><path d="M252 80L260 90M260 80L254 90" stroke="#fff" stroke-width="1.500"/>
<use href="#gd" x="402" y="76" width="16" height="16"/>
<g fill="none" stroke="#333" stroke-width="1"><circle cx="557" cy="84" r="7.500"/><ellipse cx="557" cy="84" rx="3.500" ry="7.500"/><path d="M549.500 84H564.500M551 80H563M551 88H563"/></g>
<circle cx="704" cy="84" r="7.500" fill="#fff" stroke="#222" stroke-width="1.500"/><circle cx="704" cy="84" r="4" fill="#2a7d5b"/>
<path d="M790 76C796 76 798 79 798 80L792 92C786 90 783 86 783 82Z" fill="#2d78b7"/><path d="M792 80L789 91" stroke="#cfe3f2" stroke-width="1.500"/>
<path d="M892 76C898 76 900 79 900 80L894 92C888 90 885 86 885 82Z" fill="#2d78b7"/><path d="M894 80L891 91" stroke="#cfe3f2" stroke-width="1.500"/>
<circle cx="1040" cy="81" r="5" fill="#c79a4a"/><rect x="1033" y="85" width="15" height="7" fill="#f2b619"/>
<rect x="1182" y="76" width="16" height="16" fill="#1d87b8"/><path d="M1186 77C1186 88 1194 90 1198 86C1191 87 1189 82 1190 77Z" fill="#fff"/>
<circle cx="1274" cy="84" r="7.500" fill="#5f6368"/><path d="M1270 80L1275 82L1273 85L1277 87L1274 91L1279 84L1275 78Z" fill="#fff"/>
<rect x="1417" y="76" width="16" height="16" fill="#d32d27"/><g fill="#fff"><circle cx="1420" cy="84" r="1.200"/><circle cx="1424" cy="84" r="1.200"/><circle cx="1428" cy="84" r="1.200"/></g><path d="M1431 81V87" stroke="#fff"/>
<text class="bt" x="38" y="88" textLength="59" lengthAdjust="spacingAndGlyphs">Bookmarks</text>
<text class="bt" x="137" y="88" textLength="95" lengthAdjust="spacingAndGlyphs">Rambo - YouTube</text>
<text class="bt" x="272" y="88" textLength="114" lengthAdjust="spacingAndGlyphs">Watch TV Online, St...</text>
<text class="bt" x="426" y="88" textLength="107" lengthAdjust="spacingAndGlyphs">My Drive - Google...</text>
<text class="bt" x="573" y="88" textLength="107" lengthAdjust="spacingAndGlyphs">EDS Portal 9.2.0.34...</text>
<text class="bt" x="720" y="88" textLength="46" lengthAdjust="spacingAndGlyphs">PI Vision</text>
<text class="bt" x="806" y="88" textLength="62" lengthAdjust="spacingAndGlyphs">PI Integator</text>
<text class="bt" x="908" y="88" textLength="107" lengthAdjust="spacingAndGlyphs">PI Intergrator (NEW)</text>
<text class="bt" x="1056" y="88" textLength="110" lengthAdjust="spacingAndGlyphs">List of Upcoming C...</text>
<text class="bt" x="1206" y="88" textLength="44" lengthAdjust="spacingAndGlyphs">Luna Pic</text>
<text class="bt" x="1290" y="88" textLength="112" lengthAdjust="spacingAndGlyphs">Box | Simple Online...</text>
<text class="bt" x="1442" y="88" textLength="113" lengthAdjust="spacingAndGlyphs">LastPass - Password...</text>
<text x="1652" y="89" font-size="14" fill="#5f6368">»</text>
<line x1="1671" y1="75" x2="1671" y2="93" stroke="#c4c7cb"/>
<path d="M1684 76H1689L1691 78H1696V92H1684Z" fill="#fbe08a" stroke="#d9bf6d" stroke-width=".7"/>
<text class="bt" x="1706" y="88" textLength="93" lengthAdjust="spacingAndGlyphs">Other bookmarks</text>
<line x1="1810" y1="75" x2="1810" y2="93" stroke="#c4c7cb"/>
<rect x="1822.500" y="77.500" width="12" height="13" fill="none" stroke="#5f6368" stroke-width="1.400"/><path d="M1825 81H1827M1829 81H1832M1825 84H1827M1829 84H1832M1825 87H1827M1829 87H1832" stroke="#5f6368"/>
<text class="bt" x="1844" y="88" textLength="62" lengthAdjust="spacingAndGlyphs">Reading list</text>

<!-- SketchUp top -->
<path d="M10 118H30M10 124H30M10 130H30" stroke="#555" stroke-width="1.100"/>
<text x="56" y="128.500" font-size="14" font-weight="700" fill="#55555c" textLength="215" lengthAdjust="spacingAndGlyphs">Sports complexes with base</text>
<path d="M304 119L302 123L307 123M303 122C309 119 314 123 312 128C311 131 308 131 307 131" fill="none" stroke="#777" stroke-width="1"/>
<path d="M353 119L355 123L350 123M354 122C348 119 343 123 345 128C346 131 349 131 350 131" fill="none" stroke="#c5c5ca" stroke-width="1"/>
<text x="378" y="128.500" font-size="14" font-weight="700" fill="#1d6a9c" textLength="34" lengthAdjust="spacingAndGlyphs">SAVE</text>
<text x="16" y="183" font-size="14" font-weight="700" fill="#fff" textLength="227" lengthAdjust="spacingAndGlyphs">You are viewing a temporary file</text>
<circle cx="271" cy="178" r="8.500" fill="none" stroke="#fff" stroke-width="1.200"/><path d="M271 177V183M271 173V175" stroke="#fff" stroke-width="1.400"/>
<text x="766" y="139" font-size="14" fill="#fff" textLength="275" lengthAdjust="spacingAndGlyphs">Psst, we've updated how some tools work.</text>
<text x="1071" y="139" font-size="16" font-weight="700" fill="#fff" textLength="87" lengthAdjust="spacingAndGlyphs">Learn more</text>
<use href="#su" x="1604" y="139" width="47" height="50"/>
<text x="1665" y="181" font-size="49" fill="#2d2d3c" font-weight="400" textLength="190" lengthAdjust="spacingAndGlyphs" stroke="#2d2d3c" stroke-width=".9">SketchUp</text>

<!-- Left tools -->
<g class="i" style="stroke-width:2;stroke:#444"><circle cx="17" cy="345" r="6"/><path d="M21.500 349.500L27 355" stroke-width="3"/></g>
<path d="M14 390V404L17 401.500L19.500 406L22 405L19.500 400.500L23 400Z" fill="#fff" stroke="#555" stroke-width="1.100"/>
<g transform="translate(7,423)" class="i"><path d="M3 13L10 3H19L16 12L8 18H3Z" fill="#d5d5d8"/><path d="M3 13L10 15L8 18M10 15L16 12"/></g>
<g transform="translate(7,458)" class="i"><path d="M10 2C4 2 1 8 2 13C3 18 8 18 9 14C11 18 18 17 18 11C19 6 15 2 10 2Z"/><path d="M5 8C8 6 12 6 15 11M10 14L9 8M5 12L8 4M13 5L12 10"/></g>
<g transform="translate(7,493)" class="i"><path d="M2 19L4 13L15 2L18 5L7 16Z"/><path d="M4 13L7 16"/></g>
<g transform="translate(7,528)" class="i"><path d="M3 4H17M17 4C17 12 11 17 3 18L17 4"/><g fill="#444"><circle cx="3" cy="4" r="1.500"/><circle cx="17" cy="4" r="1.500"/><circle cx="3" cy="18" r="1.500"/></g></g>
<g transform="translate(7,563)" class="i"><path d="M4 4H18V18H4ZM4 18L18 4"/><g fill="#444"><circle cx="4" cy="18" r="1.500"/><circle cx="18" cy="4" r="1.500"/></g></g>
<g transform="translate(7,597)" class="i"><path d="M10 2L13 8L15 11L19 13L10 17L1 13L6 11L8 8Z"/><path d="M1 13V15L10 19L19 15V13"/></g>
<g transform="translate(7,631)" class="i"><path d="M1 2H11V8H19V19H8V13H1Z" fill="#a9a9ae"/></g>
<g transform="translate(7,666)" class="i"><path d="M10 1L13 4H11V9H16V7L19 10L16 13V11H11V16H13L10 19L7 16H9V11H4V13L1 10L4 7V9H9V4H7Z"/></g>
<g transform="translate(7,701)" class="i"><ellipse cx="11" cy="8" rx="7" ry="6" transform="rotate(-25 11 8)"/><circle cx="11" cy="8" r="2.500"/><path d="M1 18L17 12"/></g>
<g transform="translate(7,736)" class="i"><ellipse cx="6" cy="8" rx="4" ry="6"/><ellipse cx="14" cy="7" rx="4" ry="6"/><ellipse cx="5.500" cy="16" rx="2.500" ry="3"/><ellipse cx="12" cy="15" rx="2.500" ry="3"/></g>
<g transform="translate(7,771)" class="i"><ellipse cx="10" cy="9" rx="9" ry="5"/><path d="M1 9V12C3 17 17 17 19 12V9M10 1V20M7 4L10 1L13 4" /></g>
<g fill="#bdbdc2"><path d="M30 465L34 468L30 471Z"/><path d="M30 500L34 503L30 506Z"/><path d="M30 535L34 538L30 541Z"/><path d="M30 569L34 572L30 575Z"/><path d="M30 604L34 607L30 610Z"/><path d="M30 638L34 641L30 644Z"/><path d="M30 673L34 676L30 679Z"/><path d="M30 708L34 711L30 714Z"/><path d="M30 743L34 746L30 749Z"/><path d="M30 778L34 781L30 784Z"/></g>

<!-- Right tools -->
<g transform="translate(1892,365)" class="r"><path d="M10 1L18 5V15L10 19L2 15V5Z"/><circle cx="10" cy="8" r="4"/><path d="M7 11L5 18M13 11L15 17"/></g>
<g transform="translate(1892,398)" class="r"><path d="M2 1H13V5H2ZM5 5V18M5 10H19V14H5M8 15H19V19H8"/></g>
<g transform="translate(1891,431)" class="r"><path d="M1 8L11 3L21 8L11 12Z"/><path d="M5 10V16C8 20 15 20 17 16V10M3 9V17L1 19"/></g>
<g transform="translate(1892,463)"><path d="M10 0L19 5V15L10 20L1 15V5Z" fill="#33363f"/><path d="M10 3L16 7V13L10 17L4 13V7Z" fill="none" stroke="#c8c8ce"/><path d="M10 7L13 9V12L10 14L7 12V9Z" fill="none" stroke="#e1e1e6"/></g>
<g transform="translate(1892,497)" class="r" style="stroke-width:1.100"><path d="M10 1L15 3V9L10 11L5 9V3ZM5 9L0 11V17L5 19L10 17V11M10 11V17L15 19L20 17V11L15 9"/></g>
<g transform="translate(1892,530)" class="r"><path d="M10 1L18 5V15L10 19L2 15V5Z"/><path d="M2 5L10 9L18 5M10 9V19"/><path d="M5 8L8 10V13L5 11ZM4 13L7 15V17L4 15Z" fill="#33363f"/></g>
<g transform="translate(1892,564)" class="r"><path d="M2 7L8 2L13 6V19H5L2 16ZM13 8H19V19H13"/><path d="M8 2V10M2 7L8 11V19"/></g>
<g transform="translate(1892,597)" class="r"><path d="M12 2H19V9L8 20L1 12Z"/><circle cx="15" cy="6" r="1.200" fill="#888"/></g>
<g transform="translate(1892,630)" class="r"><path d="M2 8H19V20H2ZM2 8L1 3L18 1L19 5Z"/><path d="M9 11L14 14L9 17Z"/><path d="M5 3L7 6M9 2.500L11 5.500M13 2L15 5" stroke-width="2"/></g>
<g transform="translate(1892,663)" class="r"><circle cx="5.500" cy="11" r="4.500"/><circle cx="14.500" cy="11" r="4.500"/><path d="M10 10V10.500M0 8L1 10M20 8L19 10"/></g>
<g transform="translate(1892,695)" class="r" style="stroke-width:1"><circle cx="10" cy="10" r="8.500"/><path d="M10 8V15M10 5V6"/></g>
<g transform="translate(1892,728)" class="r"><path d="M7 3H2V19H18V3H13"/><path d="M7 2H13L10 7ZM10 8L15 10V15L10 17L5 15V10ZM5 10L10 12L15 10M10 12V17"/></g>

<!-- bottom -->
<text x="95" y="995" font-size="13" font-weight="700" fill="#fff" text-anchor="middle" textLength="82" lengthAdjust="spacingAndGlyphs">Upgrade Now</text>
<circle cx="17" cy="1025" r="9.500" fill="none" stroke="#55555a" stroke-width="1.400"/><text x="13" y="1030" font-size="13" font-weight="700" fill="#55555a">?</text>
<g fill="none" stroke="#55555a" stroke-width="1.100"><circle cx="51" cy="1025" r="10.500"/><ellipse cx="51" cy="1025" rx="5" ry="10.500"/><path d="M40.500 1025H61.500M42 1020H60M42 1030H60"/></g>
<g fill="none" stroke="#55555a" stroke-width="1.200"><rect x="80" y="1014" width="14" height="22" rx="6"/><path d="M80 1022H94M87 1014V1022"/></g>
<text x="111" y="1030" font-size="14" fill="#2a2a2e" textLength="549" lengthAdjust="spacingAndGlyphs">Click or drag to select objects. Shift = Add/Subtract. Ctrl = Add. Shift + Ctrl = Subtract.</text>
<text x="1627" y="1030" font-size="14" fill="#33333a" textLength="97" lengthAdjust="spacingAndGlyphs">Measurements</text>
<use href="#su" x="1894" y="1013" width="23" height="24"/>

<!-- taskbar -->
<g fill="#fff"><path d="M17 1053L23 1052V1059.500H17Z"/><path d="M24 1051.800L32 1050V1059.500H24Z"/><path d="M17 1060.500H23V1068L17 1067Z"/><path d="M24 1060.500H32V1070L24 1068.200Z"/></g>
<g fill="none" stroke="#1b1b1b" stroke-width="1.400"><circle cx="70" cy="1057" r="5.500"/><path d="M66 1061L60 1068"/></g>
<text x="88" y="1065.500" font-size="15" fill="#1d2b3a" textLength="128" lengthAdjust="spacingAndGlyphs">Type here to search</text>
<circle cx="415" cy="1060" r="7" fill="none" stroke="#fff" stroke-width="2"/>
<g fill="none" stroke="#fff" stroke-width="1.300"><rect x="460" y="1054" width="9" height="12"/><path d="M457 1052H472M457 1068H472"/></g><rect x="471" y="1057" width="2" height="6" fill="#fff"/><rect x="456" y="1057" width="2" height="6" fill="#fff"/>
<circle cx="515" cy="1060" r="12" fill="#db4437"/><path d="M515 1060L504.600 1066A12 12 0 0 1 507 1051Z" fill="#0f9d58"/><path d="M515 1060L504.600 1066A12 12 0 0 0 526 1065Z" fill="#fbbc04"/><circle cx="515" cy="1060" r="5.500" fill="#4285f4" stroke="#fff" stroke-width="1.500"/>
<path d="M553 1051H562L565 1053H574V1059H553Z" fill="#f7c75b"/><rect x="553" y="1056" width="21" height="15" fill="#f5cd6a"/><rect x="559" y="1064" width="9" height="7" fill="#2a7ec6"/>
<rect x="604" y="1048" width="18" height="24" fill="#6e7a85"/><rect x="607" y="1051" width="12" height="5" fill="#aac4d8"/><g fill="#d0d6db"><rect x="607" y="1058" width="3" height="3"/><rect x="611.500" y="1058" width="3" height="3"/><rect x="607" y="1063" width="3" height="3"/><rect x="611.500" y="1063" width="3" height="3"/></g><rect x="616" y="1058" width="3" height="12" fill="#2a6fb8"/>
<rect x="651" y="1049" width="19" height="24" fill="#eeeee4"/><rect x="654" y="1060" width="13" height="12" fill="#49b14a"/><path d="M660 1066L671 1049" stroke="#c9972b" stroke-width="2"/>
<path d="M701 1052L716 1049L720 1068L706 1073Z" fill="#e02a2a"/><path d="M707 1058L712 1056L713 1062M708 1065L711 1064" stroke="#fff" stroke-width="1.800" fill="none"/>
<circle cx="760" cy="1057" r="10" fill="#f2eeee" stroke="#b54a4a"/><path d="M760 1050V1058L753 1061" stroke="#777" fill="none"/><path d="M759 1063L766 1072M768 1062L762 1072" stroke="#2a7ec6" stroke-width="2"/>

<path d="M1447 1051C1450 1060 1446 1067 1433 1065C1436 1072 1452 1072 1450 1058C1450 1055 1449 1052 1447 1051Z" fill="#f9c623" stroke="#f9c623"/>
<text x="1461" y="1066" font-size="13" fill="#fff" textLength="27" lengthAdjust="spacingAndGlyphs">71°F</text>
<text x="1497" y="1066" font-size="13" fill="#fff" textLength="32" lengthAdjust="spacingAndGlyphs">Clear</text>
<path d="M1549 1064L1555 1058L1561 1064" class="tr"/>
<rect x="1582" y="1056" width="7" height="8" class="tr"/><path d="M1589 1059L1593 1057V1063L1589 1061M1582 1053H1589M1582 1067H1589" class="tr"/>
<path d="M1611 1064C1610 1059 1615 1058 1617 1059C1620 1055 1626 1058 1626 1060C1629 1060 1630 1064 1628 1065Z" fill="#cfcfcf"/>
<rect x="1645" y="1057" width="15" height="8" class="tr"/><rect x="1648" y="1059" width="9" height="4" fill="#fff"/><path d="M1643 1054V1060M1641 1056H1645" class="tr"/>
<path d="M1679 1067C1679 1059 1684 1055 1691 1054M1682 1067C1682 1062 1686 1059 1691 1058M1686 1067C1686 1065 1688 1063 1690 1062" class="tr" style="stroke-width:1"/><circle cx="1690" cy="1066" r="1.200" fill="#fff"/>
<path d="M1708 1066C1705 1062 1710 1059 1712 1059C1715 1055 1721 1057 1721 1060C1724 1060 1725 1065 1722 1066Z" fill="#fff"/><path d="M1715 1066V1061M1712 1063L1715 1060L1718 1063" stroke="#1b1b1b" stroke-width="1.200" fill="none"/>
<g fill="#fff"><path d="M1743 1053L1747 1056L1743 1059L1739 1056Z"/><path d="M1751 1053L1755 1056L1751 1059L1747 1056Z"/><path d="M1743 1059L1747 1062L1743 1065L1739 1062Z"/><path d="M1751 1059L1755 1062L1751 1065L1747 1062Z"/><path d="M1747 1063L1751 1066L1747 1068.500L1743 1066Z"/></g>
<path d="M1778 1068C1775 1066 1776 1063 1778 1063L1786 1052C1788 1050 1790 1053 1788 1055L1784 1062C1786 1062 1787 1064 1785 1066" class="tr" style="stroke-width:1"/>
<text x="1835" y="1055" font-size="12" fill="#fff" text-anchor="middle" textLength="48" lengthAdjust="spacingAndGlyphs">11:00 PM</text>
<text x="1835" y="1073" font-size="12" fill="#fff" text-anchor="middle" textLength="45" lengthAdjust="spacingAndGlyphs">8/7/2021</text>
<path d="M1880 1053H1895V1065H1884L1880 1069Z" fill="#fff"/><path d="M1883 1057H1892M1883 1060H1892" stroke="#1b1b1b"/>
<circle cx="1894" cy="1067" r="7.500" fill="#3a3a3a" stroke="#999"/><text x="1891" y="1071.500" font-size="11" fill="#fff">1</text>
<line x1="1916" y1="1041" x2="1916" y2="1080" stroke="#666"/>
</svg>
</body></html>
